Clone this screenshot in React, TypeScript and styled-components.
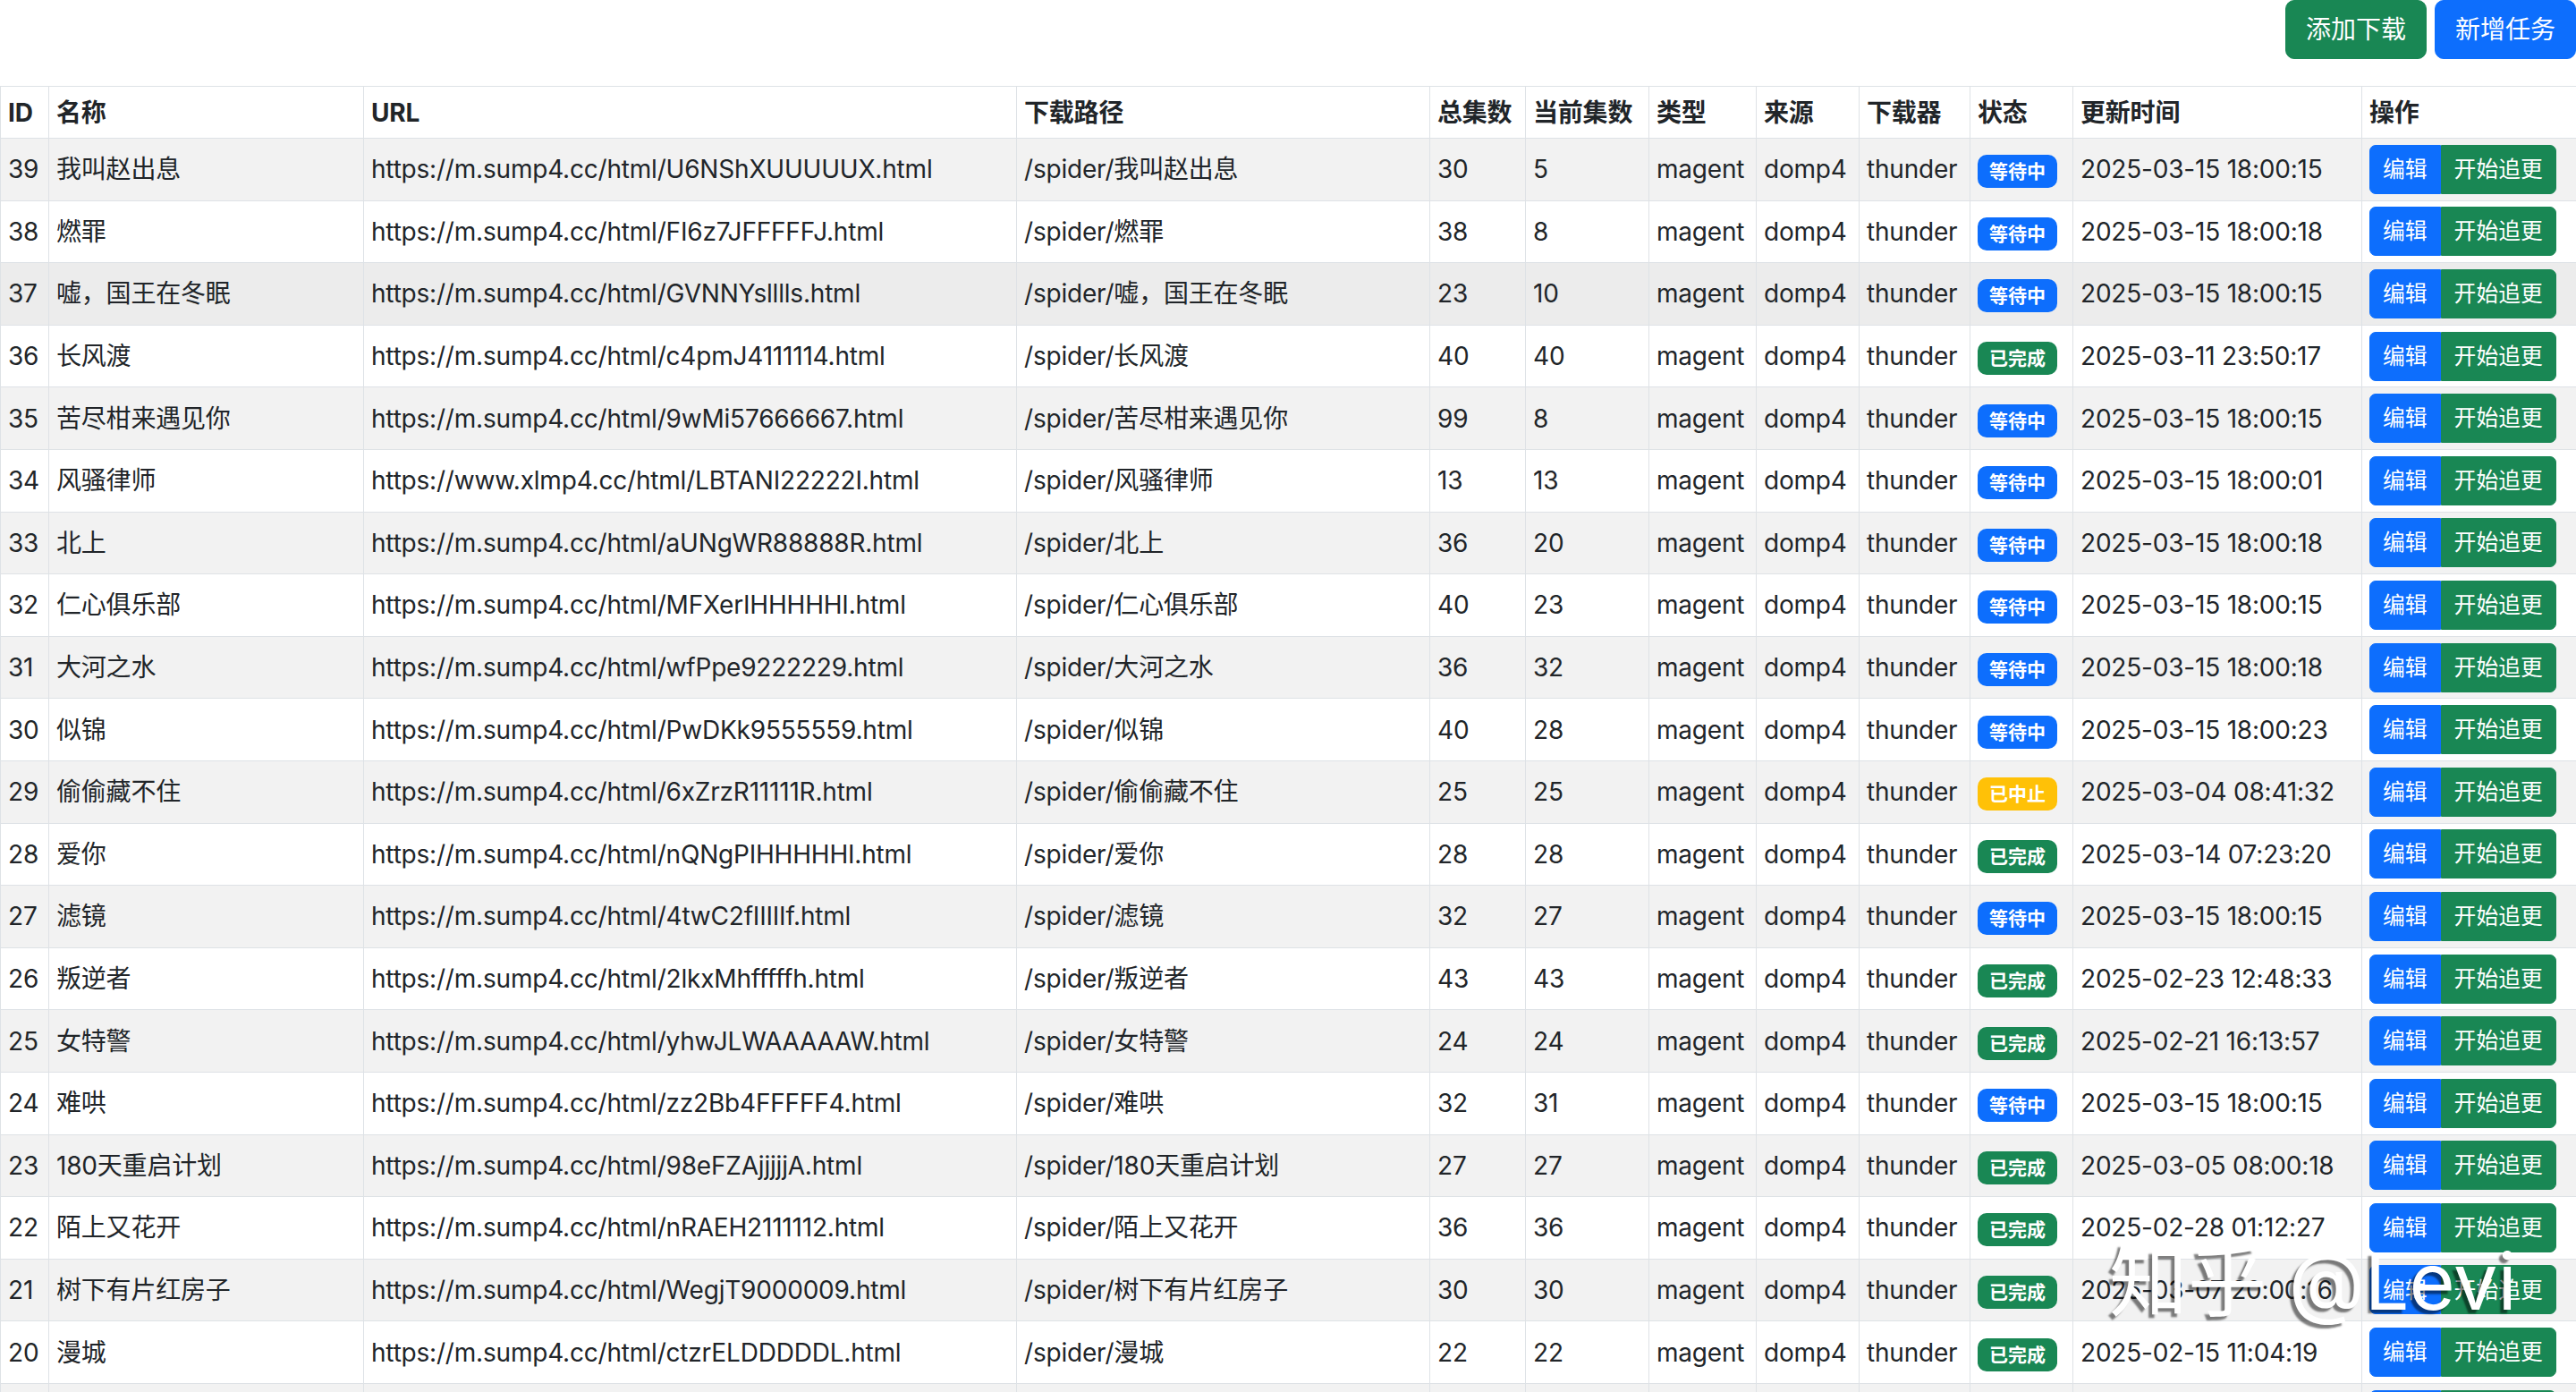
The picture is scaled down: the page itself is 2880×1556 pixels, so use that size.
import styled, { createGlobalStyle, css } from "styled-components";

const GlobalStyle = createGlobalStyle`
    body {
        margin: 0;
        background: #fff;
        color: #212529;
        font-family: Inter, "Noto Sans CJK SC", sans-serif;
        font-size: 28px;
    }
`;

const Page = styled.div`
    position: relative;
`;

const Toolbar = styled.div`
    display: flex;
    justify-content: flex-end;
    gap: 9px;
    height: 66px;
    margin-bottom: 30px;
`;

const colors = {
    primary: "#0d6efd",
    success: "#198754",
    warning: "#ffc107",
};

type Tone = keyof typeof colors;

const Button = styled.button<{ $tone: Tone }>`
    height: 66px;
    padding: 0 22px;
    border: 1px solid ${p => colors[p.$tone]};
    border-radius: 10px;
    background: ${p => colors[p.$tone]};
    color: #fff;
    font-family: inherit;
    font-size: 28px;
    line-height: 1;
`;

const Table = styled.table`
    width: 100%;
    border-collapse: collapse;
    table-layout: fixed;
`;

const cell = css`
    border: 1px solid #dee2e6;
    padding: 0 8px;
    text-align: left;
    vertical-align: middle;
    white-space: nowrap;
    line-height: 1.5;
    letter-spacing: -0.2px;
`;

const Th = styled.th`
    ${cell};
    height: 57px;
    font-weight: 700;
`;

const Row = styled.tr<{ $striped?: boolean; $hover?: boolean }>`
    background: ${p => (p.$hover ? "#ececec" : p.$striped ? "#f2f2f2" : "#fff")};
`;

const Td = styled.td`
    ${cell};
    height: 68.6px;
`;

const Badge = styled.span<{ $tone: Tone }>`
    display: inline-block;
    padding: 8px 13px;
    border-radius: 10px;
    background: ${p => colors[p.$tone]};
    color: #fff;
    font-size: 21px;
    font-weight: 700;
    line-height: 1;
    letter-spacing: 0;
    vertical-align: baseline;
`;

const ButtonGroup = styled.div`
    display: inline-flex;
    vertical-align: middle;
`;

const SmallButton = styled.button<{ $tone: Tone; $first?: boolean }>`
    height: 55px;
    padding: 0 14px;
    border: 1px solid ${p => colors[p.$tone]};
    border-radius: ${p => (p.$first ? "7px 0 0 7px" : "0 7px 7px 0")};
    background: ${p => colors[p.$tone]};
    color: #fff;
    font-family: inherit;
    font-size: 24.8px;
    line-height: 1;
`;

const Watermark = styled.div`
    position: absolute;
    left: 2358px;
    top: 1388px;
    color: #fff;
    font-size: 88px;
    line-height: 1;
    white-space: nowrap;
    pointer-events: none;
    text-shadow: -4px 4px 2px rgba(0, 0, 0, 0.5);
`;

const widths = [54, 352, 730, 462, 107, 138, 120, 115, 124, 115, 323, 240];
const heads = ["ID", "名称", "URL", "下载路径", "总集数", "当前集数", "类型", "来源", "下载器", "状态", "更新时间", "操作"];

type Status = "等待中" | "已完成" | "已中止";

interface ITask {
    id: number;
    name: string;
    url: string;
    total: number;
    current: number;
    status: Status;
    updated: string;
}

const tasks: ITask[] = [
    { id: 39, name: "我叫赵出息", url: "https://m.sump4.cc/html/U6NShXUUUUUX.html", total: 30, current: 5, status: "等待中", updated: "2025-03-15 18:00:15" },
    { id: 38, name: "燃罪", url: "https://m.sump4.cc/html/FI6z7JFFFFFJ.html", total: 38, current: 8, status: "等待中", updated: "2025-03-15 18:00:18" },
    { id: 37, name: "嘘，国王在冬眠", url: "https://m.sump4.cc/html/GVNNYslllls.html", total: 23, current: 10, status: "等待中", updated: "2025-03-15 18:00:15" },
    { id: 36, name: "长风渡", url: "https://m.sump4.cc/html/c4pmJ4111114.html", total: 40, current: 40, status: "已完成", updated: "2025-03-11 23:50:17" },
    { id: 35, name: "苦尽柑来遇见你", url: "https://m.sump4.cc/html/9wMi57666667.html", total: 99, current: 8, status: "等待中", updated: "2025-03-15 18:00:15" },
    { id: 34, name: "风骚律师", url: "https://www.xlmp4.cc/html/LBTANI22222I.html", total: 13, current: 13, status: "等待中", updated: "2025-03-15 18:00:01" },
    { id: 33, name: "北上", url: "https://m.sump4.cc/html/aUNgWR88888R.html", total: 36, current: 20, status: "等待中", updated: "2025-03-15 18:00:18" },
    { id: 32, name: "仁心俱乐部", url: "https://m.sump4.cc/html/MFXerIHHHHHI.html", total: 40, current: 23, status: "等待中", updated: "2025-03-15 18:00:15" },
    { id: 31, name: "大河之水", url: "https://m.sump4.cc/html/wfPpe9222229.html", total: 36, current: 32, status: "等待中", updated: "2025-03-15 18:00:18" },
    { id: 30, name: "似锦", url: "https://m.sump4.cc/html/PwDKk9555559.html", total: 40, current: 28, status: "等待中", updated: "2025-03-15 18:00:23" },
    { id: 29, name: "偷偷藏不住", url: "https://m.sump4.cc/html/6xZrzR11111R.html", total: 25, current: 25, status: "已中止", updated: "2025-03-04 08:41:32" },
    { id: 28, name: "爱你", url: "https://m.sump4.cc/html/nQNgPIHHHHHI.html", total: 28, current: 28, status: "已完成", updated: "2025-03-14 07:23:20" },
    { id: 27, name: "滤镜", url: "https://m.sump4.cc/html/4twC2fIIIIIf.html", total: 32, current: 27, status: "等待中", updated: "2025-03-15 18:00:15" },
    { id: 26, name: "叛逆者", url: "https://m.sump4.cc/html/2lkxMhfffffh.html", total: 43, current: 43, status: "已完成", updated: "2025-02-23 12:48:33" },
    { id: 25, name: "女特警", url: "https://m.sump4.cc/html/yhwJLWAAAAAW.html", total: 24, current: 24, status: "已完成", updated: "2025-02-21 16:13:57" },
    { id: 24, name: "难哄", url: "https://m.sump4.cc/html/zz2Bb4FFFFF4.html", total: 32, current: 31, status: "等待中", updated: "2025-03-15 18:00:15" },
    { id: 23, name: "180天重启计划", url: "https://m.sump4.cc/html/98eFZAjjjjjA.html", total: 27, current: 27, status: "已完成", updated: "2025-03-05 08:00:18" },
    { id: 22, name: "陌上又花开", url: "https://m.sump4.cc/html/nRAEH2111112.html", total: 36, current: 36, status: "已完成", updated: "2025-02-28 01:12:27" },
    { id: 21, name: "树下有片红房子", url: "https://m.sump4.cc/html/WegjT9000009.html", total: 30, current: 30, status: "已完成", updated: "2025-03-07 20:00:16" },
    { id: 20, name: "漫城", url: "https://m.sump4.cc/html/ctzrELDDDDDL.html", total: 22, current: 22, status: "已完成", updated: "2025-02-15 11:04:19" },
    { id: 19, name: "白月梵星", url: "https://m.sump4.cc/html/kq7RmV33333V.html", total: 40, current: 40, status: "已完成", updated: "2025-02-10 09:12:44" },
];

const statusTone: Record<Status, Tone> = {
    "等待中": "primary",
    "已完成": "success",
    "已中止": "warning",
};

function App() {
    return (
        <Page>
            <GlobalStyle />
            <Toolbar>
                <Button $tone="success">添加下载</Button>
                <Button $tone="primary">新增任务</Button>
            </Toolbar>
            <Table>
                <colgroup>
                    {widths.map((w, i) => <col key={i} style={{ width: w }} />)}
                </colgroup>
                <thead>
                    <tr>
                        {heads.map(h => <Th key={h}>{h}</Th>)}
                    </tr>
                </thead>
                <tbody>
                    {tasks.map((t, i) => (
                        <Row key={t.id} $striped={i % 2 === 0} $hover={t.id === 37}>
                            <Td>{t.id}</Td>
                            <Td>{t.name}</Td>
                            <Td>{t.url}</Td>
                            <Td>/spider/{t.name}</Td>
                            <Td>{t.total}</Td>
                            <Td>{t.current}</Td>
                            <Td>magent</Td>
                            <Td>domp4</Td>
                            <Td>thunder</Td>
                            <Td><Badge $tone={statusTone[t.status]}>{t.status}</Badge></Td>
                            <Td>{t.updated}</Td>
                            <Td>
                                <ButtonGroup>
                                    <SmallButton $tone="primary" $first>编辑</SmallButton>
                                    <SmallButton $tone="success">开始追更</SmallButton>
                                </ButtonGroup>
                            </Td>
                        </Row>
                    ))}
                </tbody>
            </Table>
            <Watermark>知乎 @Levi</Watermark>
        </Page>
    );
}

export default App;
